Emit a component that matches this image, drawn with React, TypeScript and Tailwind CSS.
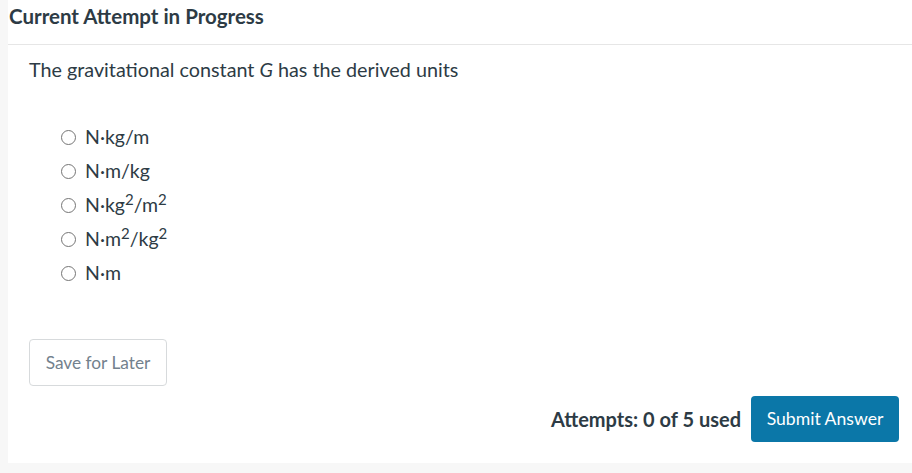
const OPTIONS = [
  <>N·kg/m</>,
  <>N·m/kg</>,
  <>N·kg<sup className="text-[15px]">2</sup>/m<sup className="text-[15px]">2</sup></>,
  <>N·m<sup className="text-[15px]">2</sup>/kg<sup className="text-[15px]">2</sup></>,
  <>N·m</>,
];

export default function App() {
  return (
    <div className="min-h-[473px] bg-[#f7f7f7] pl-[8px] font-['Lato','Noto_Sans',sans-serif] text-[#2d3b45]">
      <div className="flex h-[463px] flex-col bg-white">
        {/* Header */}
        <div className="h-[45px] border-b border-[#e6e6e6] pl-[1px] pt-[3px]">
          <h2 className="text-[20.5px] leading-[26px] font-bold">Current Attempt in Progress</h2>
        </div>

        {/* Question */}
        <div className="flex flex-1 flex-col pl-[21px] pr-[13px]">
          <p className="mt-[12px] text-[19.75px] leading-[26px]">
            The gravitational constant <i>G</i> has the derived units
          </p>

          <div className="mt-[37px] flex flex-col pl-[32px]">
            {OPTIONS.map((label, i) => (
              <label key={i} className="flex h-[34px] items-center gap-[9px] text-[19.5px] leading-[26px]">
                <span className="h-[15px] w-[15px] rounded-full border-[1.5px] border-[#757575] bg-white" />
                <span>{label}</span>
              </label>
            ))}
          </div>

          <div className="mt-[49px]">
            <button className="h-[47px] w-[138px] rounded-[4px] border border-[#d7dadc] bg-white text-[17.3px] text-[#73818d]">
              Save for Later
            </button>
          </div>

          <div className="mt-[10px] flex items-center justify-end gap-[10px]">
            <span className="text-[20px] font-bold">Attempts: 0 of 5 used</span>
            <button className="h-[46px] w-[148px] rounded-[4px] bg-[#0b77a8] text-[17.6px] text-white">
              Submit Answer
            </button>
          </div>
        </div>
      </div>
    </div>
  );
}
